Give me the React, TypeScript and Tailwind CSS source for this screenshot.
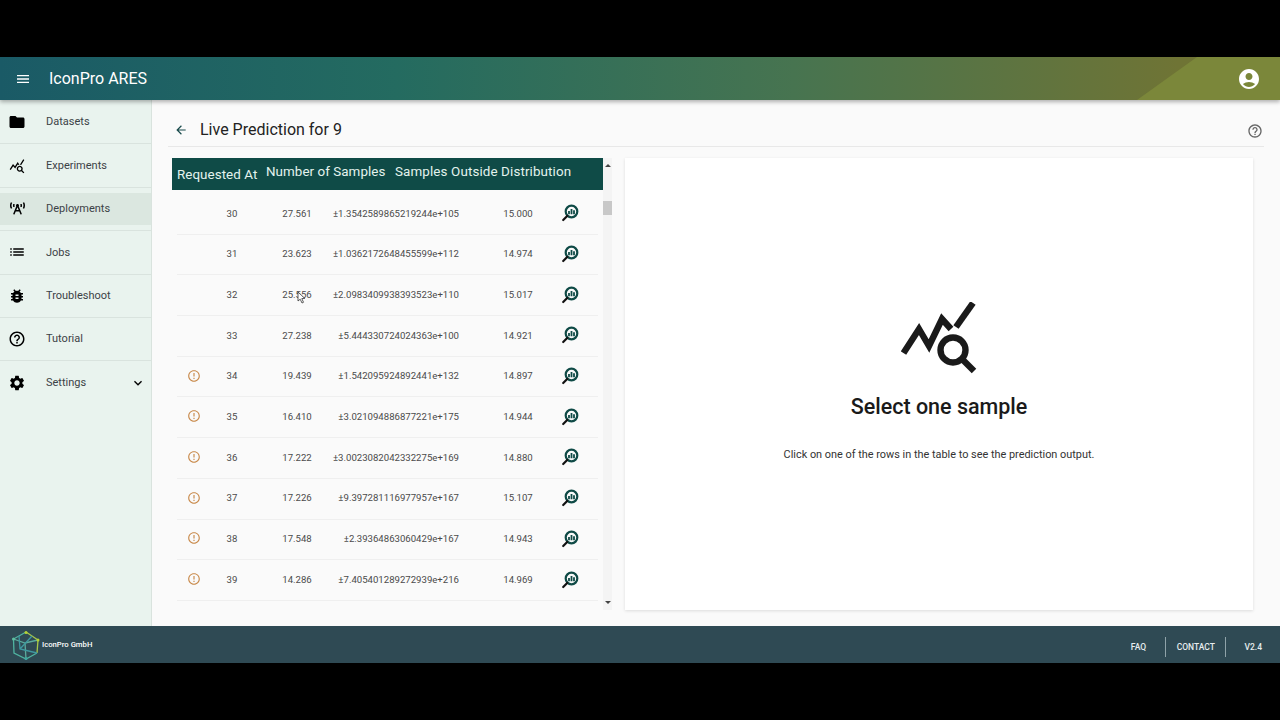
import { FaBroadcastTower } from "react-icons/fa";
import {
  MdAccountCircle,
  MdArrowBack,
  MdBugReport,
  MdErrorOutline,
  MdExpandMore,
  MdFolder,
  MdHelpOutline,
  MdList,
  MdMenu,
  MdQueryStats,
  MdSettings,
} from "react-icons/md";

const navigation = [
  { name: "Datasets", icon: <MdFolder size={18} /> },
  { name: "Experiments", icon: <MdQueryStats size={16} /> },
  { name: "Deployments", icon: <FaBroadcastTower size={15} />, active: true },
  { name: "Jobs", icon: <MdList size={18} /> },
  { name: "Troubleshoot", icon: <MdBugReport size={18} /> },
  { name: "Tutorial", icon: <MdHelpOutline size={18} /> },
  { name: "Settings", icon: <MdSettings size={18} />, more: true },
];

const rows = [
  { id: 30, samples: "27.561", value: "±1.3542589865219244e+105", outside: "15.000" },
  { id: 31, samples: "23.623", value: "±1.0362172648455599e+112", outside: "14.974" },
  { id: 32, samples: "25.556", value: "±2.0983409938393523e+110", outside: "15.017" },
  { id: 33, samples: "27.238", value: "±5.444330724024363e+100", outside: "14.921" },
  { id: 34, samples: "19.439", value: "±1.542095924892441e+132", outside: "14.897", warn: true },
  { id: 35, samples: "16.410", value: "±3.021094886877221e+175", outside: "14.944", warn: true },
  { id: 36, samples: "17.222", value: "±3.0023082042332275e+169", outside: "14.880", warn: true },
  { id: 37, samples: "17.226", value: "±9.397281116977957e+167", outside: "15.107", warn: true },
  { id: 38, samples: "17.548", value: "±2.39364863060429e+167", outside: "14.943", warn: true },
  { id: 39, samples: "14.286", value: "±7.405401289272939e+216", outside: "14.969", warn: true },
];

function InspectIcon() {
  return (
    <svg width="18" height="18" viewBox="0 0 18 18" fill="none">
      <circle cx="10.5" cy="7.5" r="5.8" stroke="#0f4a46" strokeWidth="2.2" />
      <path d="M6.2 12 L2.2 16" stroke="#111" strokeWidth="2.2" strokeLinecap="round" />
      <path d="M8 7v3.2M10.5 5v5.2M13 6.2v4" stroke="#0f4a46" strokeWidth="1.8" />
    </svg>
  );
}

function BigQueryIcon() {
  return (
    <svg width="76" height="72" viewBox="0 0 76 72" fill="none" stroke="#1a1a1a" strokeWidth="6.4">
      <path d="M2.5 51 L18 27 L28 44 L41 17 L50 27" />
      <path d="M55 25 L72 1" />
      <circle cx="52" cy="48" r="12.5" />
      <path d="M61 57 L73 69" />
    </svg>
  );
}

function CubeLogo() {
  return (
    <svg width="30" height="30" viewBox="0 0 30 30" fill="none" strokeWidth="1.3">
      <path d="M14 2 L26 10 L25 23" stroke="#a8c84a" />
      <path d="M25 23 L14 29 L2 23 L1.5 9 L14 2" stroke="#4fb3a0" />
      <path d="M1.5 9 L13 13 L26 10 M13 13 L14 29" stroke="#5cab9c" />
      <path d="M7 6 L8 19 L25 23 M8 19 L20 6" stroke="#3f98a0" />
      <circle cx="14" cy="2.5" r="1.5" fill="#b5d334" stroke="none" />
      <circle cx="26" cy="10" r="1.5" fill="#b5d334" stroke="none" />
      <circle cx="14" cy="28.5" r="1.5" fill="#3fa7a0" stroke="none" />
      <circle cx="1.5" cy="9" r="1.5" fill="#5fc0a0" stroke="none" />
    </svg>
  );
}

export default function App() {
  return (
    <div className="h-[720px] w-[1280px] bg-black py-[57px] overflow-hidden flex flex-col font-['Roboto',sans-serif]">
      {/* App bar */}
      <header className="relative z-10 h-[43px] shrink-0 flex items-center justify-between pl-[15px] pr-[19px] text-white bg-[linear-gradient(90deg,#1a5a66_0%,#246b60_31%,#477450_62%,#6f7435_92%)] shadow-[0_2px_4px_rgba(0,0,0,0.3)]">
        <span className="absolute right-0 top-0 h-full w-[143px] bg-[#7b873a] [clip-path:polygon(60px_0,100%_0,100%_100%,0_100%)]" />
        <div className="relative flex items-center gap-[18px]">
          <MdMenu size={16} />
          <span className="text-[16px] font-normal leading-[20px] pt-[1px]">IconPro ARES</span>
        </div>
        <MdAccountCircle size={24} className="relative" />
      </header>

      <div className="flex-1 flex min-h-0">
        {/* Sidebar */}
        <aside className="w-[152px] shrink-0 bg-[#e9f3ee] border-r border-[#d9e3de] pt-[1px]">
          {navigation.map((item) => (
            <div
              key={item.name}
              className={
                item.more
                  ? "h-[43.4px] flex items-center text-[#3c4246] text-[11px]"
                  : "h-[43.4px] flex items-center border-b border-[#d9e3de] text-[#3c4246] text-[11px]"
              }
            >
              <div className={item.active ? "h-[32px] w-full flex items-center bg-[#dbe7e0]" : "h-[32px] w-full flex items-center"}>
                <span className="w-[46px] pl-[8px] flex items-center justify-start text-black">
                  <span className="w-[18px] flex justify-center">{item.icon}</span>
                </span>
                <span className="flex-1 pt-[1px]">{item.name}</span>
                {item.more && <MdExpandMore size={16} className="text-black mr-[5px]" />}
              </div>
            </div>
          ))}
        </aside>

        {/* Content */}
        <main className="flex-1 min-w-0 bg-[#fafafa] pl-[16px] pr-[16px] flex flex-col">
          <div className="h-[47px] shrink-0 flex items-center justify-between border-b border-[#e8e8e8] pt-[16px] pb-[3px] px-[6px]">
            <div className="flex items-center gap-[12px]">
              <MdArrowBack size={14} className="text-[#17494a] mt-[1px]" />
              <h1 className="text-[16px] font-normal text-[#222]">Live Prediction for 9</h1>
            </div>
            <MdHelpOutline size={16} className="text-[#666] -mr-[5px] mt-[2px]" />
          </div>

          <div className="flex-1 flex gap-[13px] pl-[4px] pr-[11px] pt-[11px] pb-[16px] min-h-0">
            {/* Table */}
            <div className="w-[440px] shrink-0 flex flex-col relative">
              <div className="flex flex-1 min-h-0">
                <div className="w-[431px] flex flex-col">
                  <div className="h-[32px] shrink-0 bg-[#0f4b47] text-[#e4f3ee] text-[13.4px] flex items-center pl-[5px] pb-[4px] tracking-[0.05px]">
                    <span className="w-[89px] pt-[6px]">Requested At</span>
                    <span className="w-[129px]">Number of Samples</span>
                    <span className="tracking-[0.12px]">Samples Outside Distribution</span>
                  </div>
                  <div className="flex-1 mx-[5px] pt-[4px] text-[9.6px] text-[#4a4a4a]">
                    {rows.map((row) => (
                      <div key={row.id} className="h-[40.7px] flex items-center border-b border-[#efefef]">
                        <span className="w-[36px] flex justify-start pl-[10px]">
                          {row.warn && <MdErrorOutline size={14} className="text-[#c98a4b] -mt-[2px]" />}
                        </span>
                        <span className="w-[38px] text-center">{row.id}</span>
                        <span className="w-[48px] ml-[22px] text-center">{row.samples}</span>
                        <span className="w-[138px] text-right whitespace-nowrap">{row.value}</span>
                        <span className="w-[60px] ml-[29px] text-center">{row.outside}</span>
                        <span className="w-[18px] ml-[13px] flex justify-center -mt-[1px]">
                          <InspectIcon />
                        </span>
                      </div>
                    ))}
                  </div>
                </div>
                {/* Scrollbar */}
                <div className="w-[9px] bg-[#f4f4f4] flex flex-col items-center justify-between py-[6px] relative">
                  <span className="w-0 h-0 border-x-[3px] border-x-transparent border-b-[3px] border-b-[#444]" />
                  <span className="w-0 h-0 border-x-[3px] border-x-transparent border-t-[3px] border-t-[#444]" />
                  <span className="absolute top-[43px] left-0 w-[9px] h-[14px] bg-[#c8c8c8]" />
                </div>
              </div>
              {/* Mouse pointer */}
              <svg className="absolute left-[125px] top-[133px]" width="9" height="13" viewBox="0 0 9 13">
                <path d="M1 1 L1 10 L3.2 8.2 L5 12 L6.5 11.3 L4.8 7.6 L7.8 7.4 Z" fill="#fff" stroke="#333" strokeWidth="0.8" />
              </svg>
            </div>

            {/* Empty state */}
            <section className="flex-1 bg-white shadow-[0_1px_3px_rgba(0,0,0,0.12)] flex flex-col items-center pt-[144px]">
              <BigQueryIcon />
              <h2 className="mt-[19px] text-[21.5px] font-medium text-[#1a1a1a] leading-[28px]">Select one sample</h2>
              <p className="mt-[26px] text-[10.9px] text-[#333]">
                Click on one of the rows in the table to see the prediction output.
              </p>
            </section>
          </div>
        </main>
      </div>

      {/* Footer */}
      <footer className="h-[37px] shrink-0 bg-[#2f4a54] flex items-center justify-between pl-[12px] pr-[18px] text-white">
        <div className="flex items-center">
          <CubeLogo />
          <span className="text-[7.7px] font-medium">IconPro GmbH</span>
        </div>
        <div className="flex items-center text-[8.5px] font-medium text-[#e6edef] pt-[5px]">
          <span className="pr-[19px]">FAQ</span>
          <span className="h-[20px] w-px bg-[#8fa3a9]" />
          <span className="px-[10.5px]">CONTACT</span>
          <span className="h-[20px] w-px bg-[#8fa3a9]" />
          <span className="pl-[18px]">V2.4</span>
        </div>
      </footer>
    </div>
  );
}
